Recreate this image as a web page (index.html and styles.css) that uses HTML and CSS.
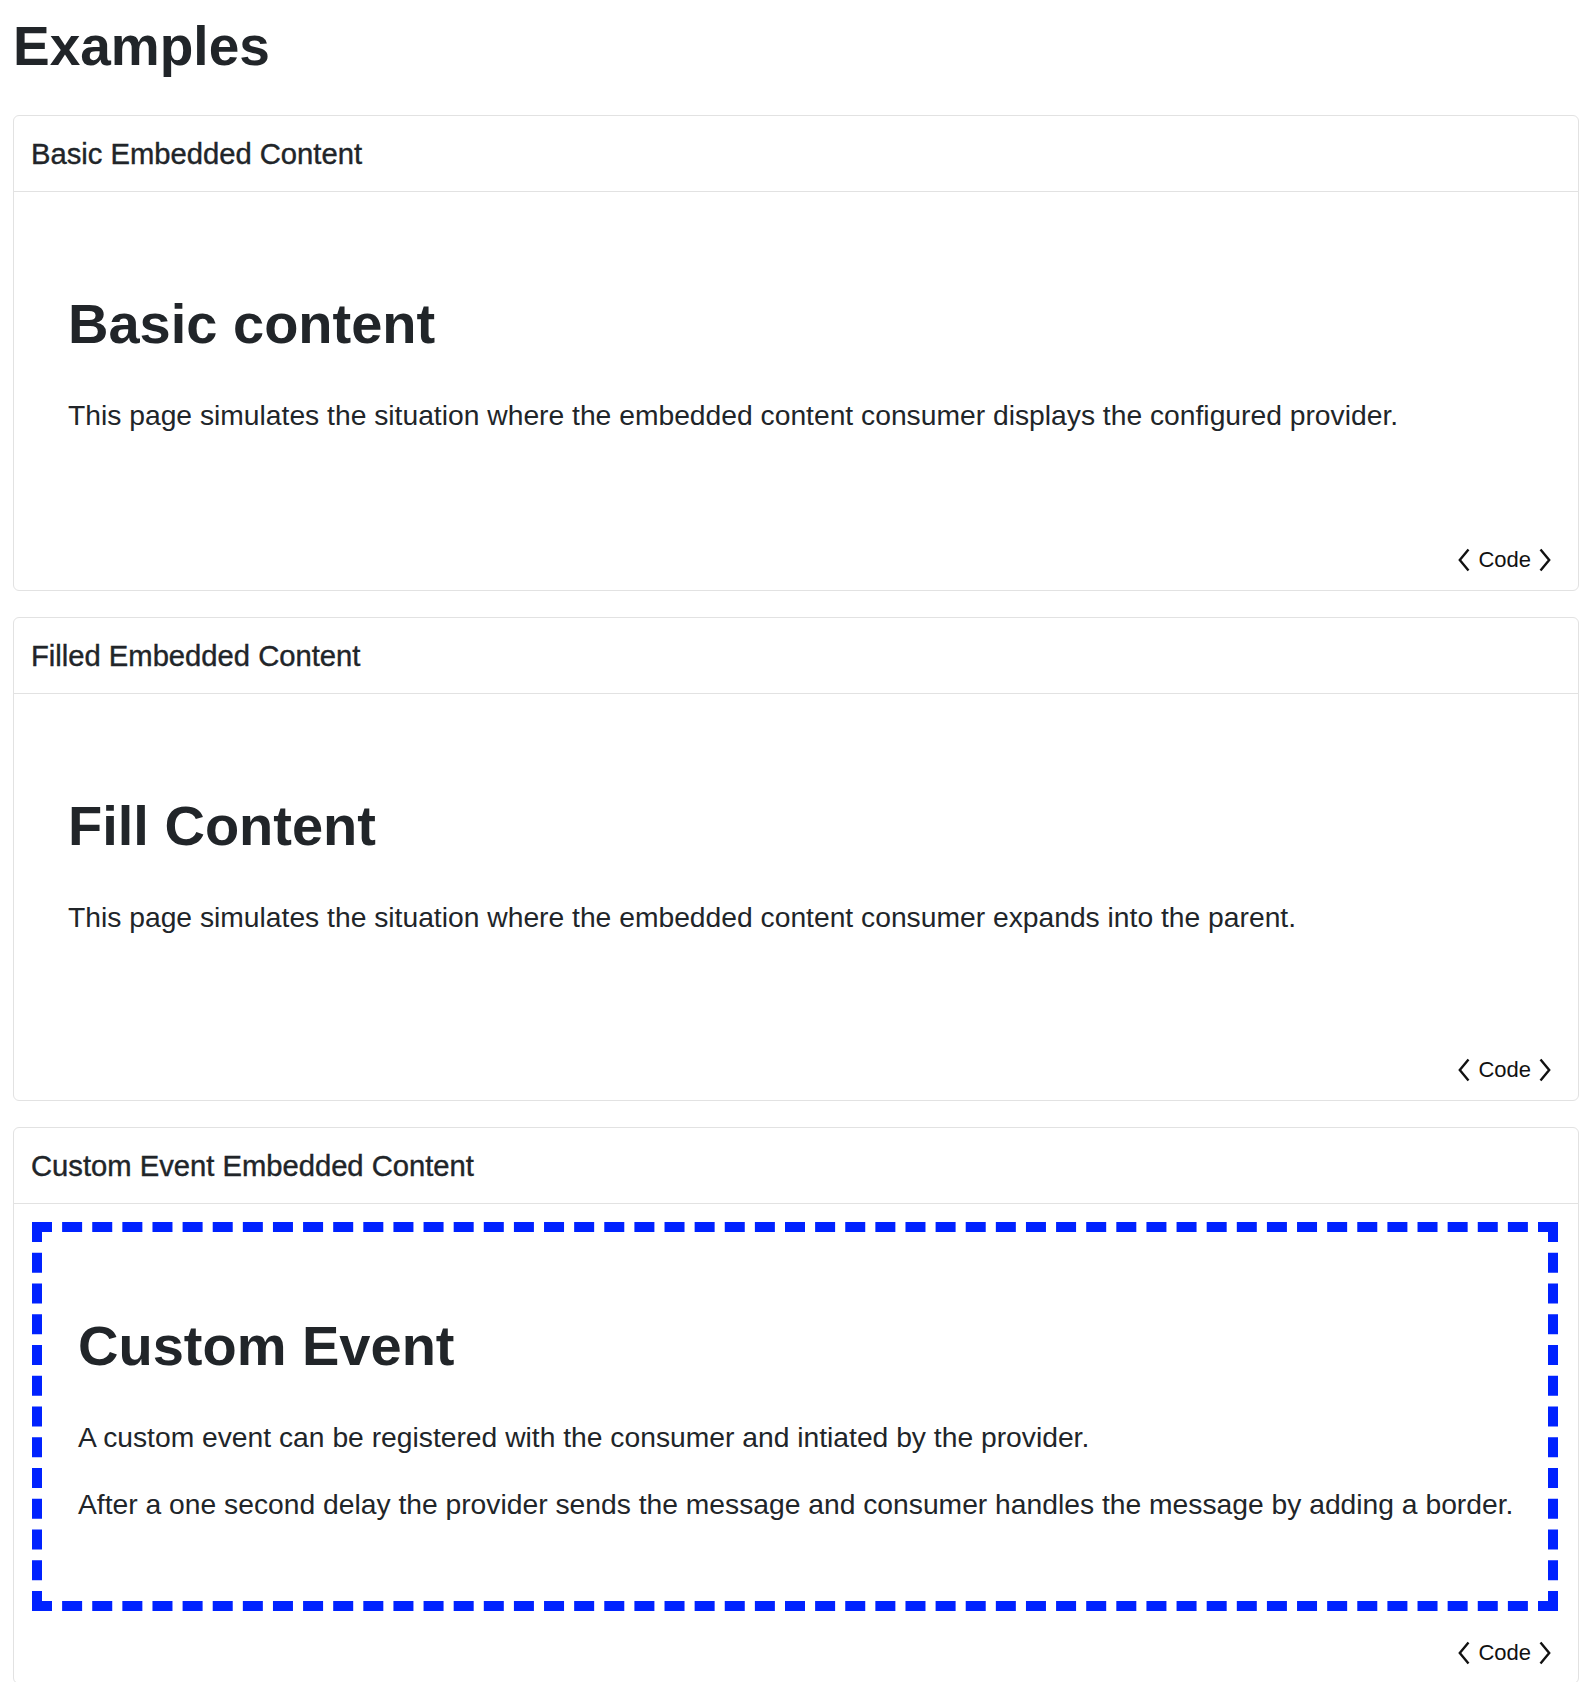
FILE: index.html
```html
<!DOCTYPE html>
<html lang="en">

<head>
    <meta charset="UTF-8">
    <meta name="viewport" content="width=device-width, initial-scale=1.0">
    <title>Examples</title>
    <link rel="stylesheet" href="styles.css">
</head>

<body>
    <div class="page">
        <h1 class="page-title">Examples</h1>

        <div class="card">
            <div class="card-header">Basic Embedded Content</div>
            <div class="card-body">
                <div class="embed embed-basic">
                    <h1>Basic content</h1>
                    <p>This page simulates the situation where the embedded content consumer displays the configured provider.</p>
                </div>
                <div class="code-row">
                    <a class="code-link" href="#">
                        <svg class="chevron" viewBox="0 0 12 24"><polyline points="10.5,1.5 1.8,12 10.5,22.5" /></svg>
                        <span>Code</span>
                        <svg class="chevron" viewBox="0 0 12 24"><polyline points="1.5,1.5 10.2,12 1.5,22.5" /></svg>
                    </a>
                </div>
            </div>
        </div>

        <div class="card">
            <div class="card-header">Filled Embedded Content</div>
            <div class="card-body">
                <div class="embed embed-fill">
                    <h1>Fill Content</h1>
                    <p>This page simulates the situation where the embedded content consumer expands into the parent.</p>
                </div>
                <div class="code-row">
                    <a class="code-link" href="#">
                        <svg class="chevron" viewBox="0 0 12 24"><polyline points="10.5,1.5 1.8,12 10.5,22.5" /></svg>
                        <span>Code</span>
                        <svg class="chevron" viewBox="0 0 12 24"><polyline points="1.5,1.5 10.2,12 1.5,22.5" /></svg>
                    </a>
                </div>
            </div>
        </div>

        <div class="card">
            <div class="card-header">Custom Event Embedded Content</div>
            <div class="card-body">
                <div class="embed embed-event">
                    <h1>Custom Event</h1>
                    <p>A custom event can be registered with the consumer and intiated by the provider.</p>
                    <p>After a one second delay the provider sends the message and consumer handles the message by adding a border.</p>
                </div>
                <div class="code-row">
                    <a class="code-link" href="#">
                        <svg class="chevron" viewBox="0 0 12 24"><polyline points="10.5,1.5 1.8,12 10.5,22.5" /></svg>
                        <span>Code</span>
                        <svg class="chevron" viewBox="0 0 12 24"><polyline points="1.5,1.5 10.2,12 1.5,22.5" /></svg>
                    </a>
                </div>
            </div>
        </div>
    </div>
</body>

</html>
```

FILE: styles.css
```css
/* Reset */
* {
    box-sizing: border-box;
}

body {
    margin: 0;
    background-color: #fff;
    color: #212529;
    font-family: 'Liberation Sans', Arial, sans-serif;
}

/* Page */
.page {
    padding: 13px;
}

.page-title {
    margin: 0 0 36px;
    font-size: 55px;
    font-weight: bold;
    line-height: 1.2;
}

/* Cards */
.card {
    border: 1px solid #e2e2e2;
    border-radius: 6px;
    margin-bottom: 26px;
    background-color: #fff;
}

.card-header {
    padding: 21px 17px 19px;
    border-bottom: 1px solid #e2e2e2;
    font-size: 29.2px;
    line-height: 1.2;
    -webkit-text-stroke: 0.4px #212529;
}

.card-body {
    padding: 18px 20px 14px 18px;
}

/* Embedded content */
.embed {
    padding: 80px 10px 1px 36px;
}

.embed h1 {
    margin: 0 0 37px;
    font-size: 56px;
    font-weight: bold;
    line-height: 1.2;
}

.embed p {
    margin: 0 0 24px;
    font-size: 28.25px;
    line-height: 1.5;
}

.embed-basic {
    min-height: 308px;
}

.embed-fill {
    min-height: 316px;
}

.embed-event {
    padding-bottom: 52px;
    margin-bottom: 8px;
    border: 10px dashed #0022ff;
}

/* Code toggle */
.code-row {
    display: flex;
    justify-content: flex-end;
    margin-top: 25px;
    padding-right: 7px;
}

.code-link {
    display: flex;
    align-items: center;
    gap: 8px;
    color: #111;
    text-decoration: none;
    font-size: 22px;
    line-height: 1.5;
}

.chevron {
    width: 12px;
    height: 24px;
}

.chevron polyline {
    fill: none;
    stroke: #111;
    stroke-width: 2.4;
}
```
